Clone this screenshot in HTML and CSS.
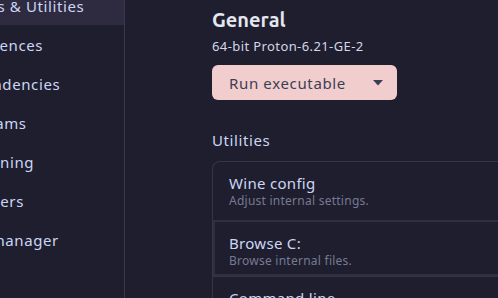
FILE: index.html
```html
<!DOCTYPE html>
<html>
<head>
<meta charset="utf-8">
<link rel="stylesheet" href="styles.css">
</head>
<body>
<div class="app">
  <nav class="sidebar">
    <ul class="nav-list">
      <li class="nav-item active">Details &amp; Utilities</li>
      <li class="nav-item">Preferences</li>
      <li class="nav-item">Dependencies</li>
      <li class="nav-item">Programs</li>
      <li class="nav-item">Versioning</li>
      <li class="nav-item">Installers</li>
      <li class="nav-item">Task manager</li>
    </ul>
  </nav>
  <main class="content">
    <h1 class="title">General</h1>
    <div class="subtitle">64-bit Proton-6.21-GE-2</div>
    <button class="run-btn">
      <span>Run executable</span>
      <svg class="caret" width="10" height="6" viewBox="0 0 10 6"><path d="M0 0 H10 L5 5.5 Z" fill="#3b3f55"/></svg>
    </button>
    <h2 class="section">Utilities</h2>
    <div class="list">
      <div class="row">
        <div class="row-title">Wine config</div>
        <div class="row-sub">Adjust internal settings.</div>
      </div>
      <div class="row hover">
        <div class="row-title">Browse C:</div>
        <div class="row-sub">Browse internal files.</div>
      </div>
      <div class="row">
        <div class="row-title">Command line</div>
        <div class="row-sub">Run commands inside the prefix.</div>
      </div>
    </div>
  </main>
</div>
</body>
</html>
```
FILE: styles.css
```css
* { box-sizing: border-box; }
html, body { margin: 0; padding: 0; }
body {
  background: #1e1e2e;
  font-family: "Noto Sans", sans-serif;
  color: #cdd6f4;
  width: 498px;
  height: 298px;
  overflow: hidden;
}
.app {
  display: flex;
  height: 298px;
}
.sidebar {
  width: 125px;
  flex: none;
  border-right: 1px solid #38384a;
  overflow: hidden;
}
.nav-list {
  list-style: none;
  margin: -14px 0 0 -59px;
  padding: 0;
}
.nav-item {
  height: 39px;
  display: flex;
  align-items: center;
  padding-left: 12px;
  font-size: 15px;
  letter-spacing: 0.6px;
  white-space: nowrap;
  color: #cdd6f4;
}
.nav-item.active {
  background: #2e2b41;
}
.content {
  flex: 1;
  padding-left: 87px;
  overflow: hidden;
}
.title {
  margin: 8px 0 0;
  font-family: "Ubuntu", "Noto Sans", sans-serif;
  font-size: 20px;
  font-weight: 700;
  line-height: 24px;
  color: #e4e6f0;
}
.subtitle {
  margin-top: 5px;
  font-size: 13px;
  line-height: 18px;
  letter-spacing: 0.4px;
  color: #d3d7ea;
}
.run-btn {
  margin-top: 10px;
  width: 185px;
  height: 35px;
  border: none;
  border-radius: 6px;
  background: #f2cdcd;
  display: flex;
  align-items: center;
  justify-content: space-between;
  padding: 0 14px 0 17px;
  font-family: inherit;
  font-size: 15px;
  letter-spacing: 0.65px;
  color: #3b3f55;
}
.caret { display: block; }
.section {
  margin: 30px 0 0;
  font-size: 15px;
  font-weight: 400;
  line-height: 20px;
  letter-spacing: 0.6px;
  color: #cdd6f4;
}
.list {
  margin-top: 11px;
  border: 1px solid #34344a;
  border-right: none;
  border-radius: 8px 0 0 8px;
  width: 300px;
}
.row {
  height: 58px;
  padding: 11px 0 0 16px;
  border-top: 1px solid #34344a;
}
.row:first-child { border-top: none; }
.row.hover {
  height: 56px;
  border: 2px solid #2f2f42;
  border-right: none;
  padding-left: 14px;
}
.row-title {
  font-size: 15px;
  line-height: 20px;
  letter-spacing: 0.3px;
  color: #cdd6f4;
}
.row-sub {
  font-size: 12px;
  line-height: 16px;
  letter-spacing: 0.25px;
  color: #767a92;
}
```
